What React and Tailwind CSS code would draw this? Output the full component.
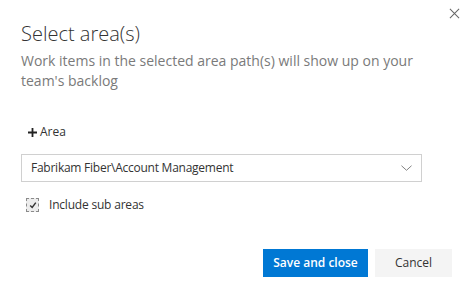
import React, { useState } from 'react';

const App = () => {
  const [checked, setChecked] = useState(true);

  return (
    <div className="relative w-[474px] h-[296px] bg-white font-['Open_Sans',sans-serif] text-[#333333]">
      <button type="button" className="absolute top-[7px] right-[14px] w-[12px] h-[12px] flex items-center justify-center text-[#666666]">
        <svg viewBox="0 0 12 12" className="w-[11px] h-[11px]" fill="none" stroke="currentColor" strokeWidth="1.1">
          <path d="M1 1 L11 11 M11 1 L1 11" />
        </svg>
      </button>

      <div className="pl-[21px] pr-[22px] pt-[20px] flex flex-col">
        <h1 className="text-[20px] leading-[28px] font-light text-[#333333]">Select area(s)</h1>
        <p className="mt-[3px] text-[14px] leading-[20px] text-[#7a7a7a] w-[400px]">
          Work items in the selected area path(s) will show up on your team's backlog
        </p>

        <button type="button" className="mt-[31px] ml-[7px] flex items-center h-[20px] text-[12px] text-[#333333] self-start">
          <svg viewBox="0 0 10 10" className="w-[9px] h-[9px]" fill="none" stroke="#222222" strokeWidth="2">
            <path d="M5 0 V10 M0 5 H10" />
          </svg>
          <span className="ml-[3px]">Area</span>
        </button>

        <div className="mt-[12px] h-[28px] w-[401px] border border-[#d0d0d0] flex items-center justify-between pl-[9px] pr-[9px] text-[12px] tracking-[-0.25px] text-[#333333]">
          <span>Fabrikam Fiber\Account Management</span>
          <svg viewBox="0 0 12 6" className="w-[11px] h-[6px]" fill="none" stroke="#777777" strokeWidth="1">
            <path d="M0.5 0.5 L6 5.5 L11.5 0.5" />
          </svg>
        </div>

        <label className="mt-[14px] ml-[5px] flex items-center gap-[10px] text-[12px] tracking-[-0.2px] text-[#333333] cursor-pointer">
          <span
            onClick={() => setChecked(!checked)}
            className="w-[13px] h-[14px] border border-dashed border-[#8a8a8a] bg-[#ececec] flex items-center justify-center"
          >
            {checked && (
              <svg viewBox="0 0 10 10" className="w-[8px] h-[8px]" fill="none" stroke="#333333" strokeWidth="1.8">
                <path d="M1.5 5.5 L4 8 L8.5 2" />
              </svg>
            )}
          </span>
          <span>Include sub areas</span>
        </label>

        <div className="mt-[35px] flex justify-end gap-[7px]">
          <button type="button" className="w-[105px] h-[28px] bg-[#0078d4] text-white text-[12px] font-semibold">
            Save and close
          </button>
          <button type="button" className="w-[77px] h-[28px] bg-[#f4f4f4] text-[#333333] text-[12px]">
            Cancel
          </button>
        </div>
      </div>
    </div>
  );
};

export default App;
